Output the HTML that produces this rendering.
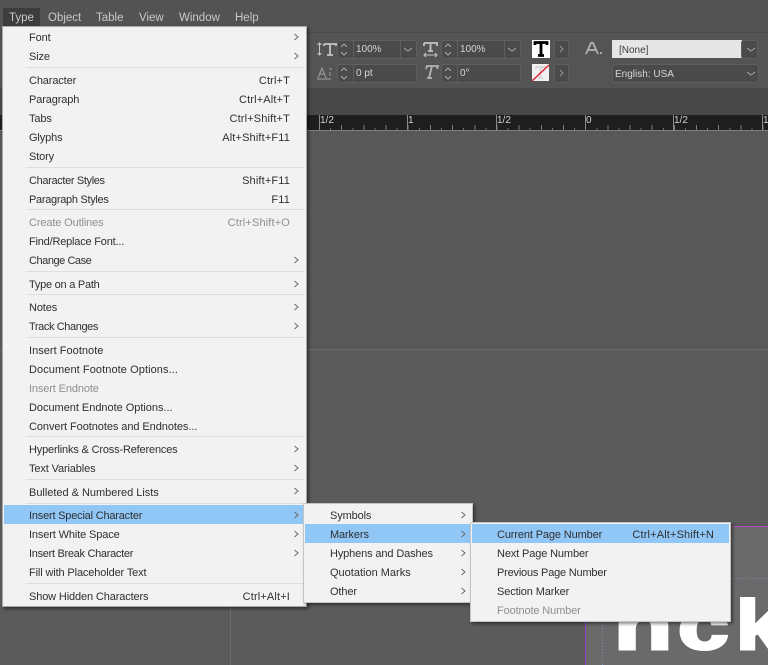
<!DOCTYPE html>
<html><head><meta charset="utf-8"><style>
html,body{margin:0;padding:0;width:768px;height:665px;overflow:hidden;background:#595959}
body{position:relative;font-family:"Liberation Sans",sans-serif}
div,span,svg{position:absolute}
.t{font-size:11px;letter-spacing:-.13px;line-height:16px;height:16px;color:#2f2f2f;white-space:nowrap;margin-top:1px}
.s{text-align:right;letter-spacing:.15px}
.d{color:#8f8f8f}
.m{font-size:11.5px;letter-spacing:0;color:#c9c9c9;line-height:16px;top:10px;white-space:nowrap}
.sep{background:#dedede;height:1px}
.hl{background:#91c7f7;height:19px}
.box{border:1px solid #5f5f5f;border-radius:3px;background:#4a4a4a;box-sizing:border-box;height:19px}
.v{background:#5f5f5f;width:1px;height:17px;top:0}
.c{font-size:10px;color:#d6d6d6;line-height:17px;white-space:nowrap;margin-top:1px}
.rt{font-size:10px;color:#d0d0d0;top:115px;line-height:12px;margin-left:-1px}
.rm{background:#8a8a8a;width:1px;top:115px;height:15px}
</style></head><body>

<!-- app top bar -->
<div style="left:0;top:0;width:768px;height:33px;background:#535353"></div>
<div style="left:0;top:32px;width:768px;height:1px;background:#4a4a4a"></div>
<div style="left:3px;top:8px;width:37px;height:18px;background:#3d3d3d"></div>
<div class="m" style="left:9px">Type</div>
<div class="m" style="left:48px">Object</div>
<div class="m" style="left:96px">Table</div>
<div class="m" style="left:139px">View</div>
<div class="m" style="left:179px">Window</div>
<div class="m" style="left:235px">Help</div>

<!-- control panel -->
<div style="left:0;top:33px;width:768px;height:55px;background:#545454"></div>
<div style="left:0;top:88px;width:768px;height:27px;background:#484848"></div>

<div class="box" style="left:337px;top:40px;width:80px"><div class="v" style="left:15px"></div><div class="v" style="left:62px"></div></div>
<div class="c" style="left:356px;top:40px">100%</div>
<div class="box" style="left:337px;top:64px;width:80px"><div class="v" style="left:15px"></div></div>
<div class="c" style="left:356px;top:64px">0 pt</div>
<div class="box" style="left:441px;top:40px;width:80px"><div class="v" style="left:15px"></div><div class="v" style="left:62px"></div></div>
<div class="c" style="left:460px;top:40px">100%</div>
<div class="box" style="left:441px;top:64px;width:80px"><div class="v" style="left:15px"></div></div>
<div class="c" style="left:460px;top:64px">0°</div>
<div class="box" style="left:554px;top:40px;width:15px"></div>
<div class="box" style="left:554px;top:64px;width:15px"></div>

<svg style="left:0;top:0" width="768" height="120" fill="none" stroke="#a8a8a8" stroke-width="1">
<path d="M341 47l3-3 3 3M341 52l3 3 3-3M445 47l3-3 3 3M445 52l3 3 3-3M341 71l3-3 3 3M341 76l3 3 3-3M445 71l3-3 3 3M445 76l3 3 3-3"/>
<path d="M404 48l4 3 4-3M508 48l4 3 4-3"/>
<path d="M560 46l3 3-3 3M560 70l3 3-3 3" stroke="#9a9a9a"/>
<path d="M319.500 43v12M317.500 45l2-2 2 2M317.500 53l2 2 2-2" stroke="#c4c4c4"/>
<path d="M324 44h12v2M324 44v2M330 44v11M327 55h6" stroke="#c4c4c4" stroke-width="1.800"/>
<path d="M424 43h13v3M424 43v3M430.500 43v8M428 51h5" stroke="#c4c4c4" stroke-width="1.800"/>
<path d="M424 55h13M426 53l-2 2 2 2M435 53l2 2-2 2" stroke="#c4c4c4"/>
<path d="M318 78l4-10 4 10M320 74h4M317 79h14M329 69h3M330 76v-4" stroke="#a2a2a2"/>
<path d="M426 66h12l-1 3M427 66l-1 3M432 66l-3 12M427 78h5" stroke="#b4b4b4" stroke-width="1.800"/>
<path d="M586 54l5-11h2l5 11M588 50h8" stroke="#a8a8a8" stroke-width="2"/>
<path d="M600 53h2" stroke="#a8a8a8" stroke-width="2"/>
</svg>

<!-- swatches -->
<div style="left:532px;top:40px;width:18px;height:18px;background:#fff"></div>
<svg style="left:532px;top:40px" width="18" height="18"><path d="M3 5V2.500H15V5M9 2.500V15M6 15.500H12" fill="none" stroke="#000" stroke-width="2.800"/></svg>
<div style="left:532px;top:64px;width:17px;height:17px;background:#f2f2f2"></div>
<svg style="left:532px;top:64px" width="18" height="18"><path d="M4 5V3H13V5M8.500 3V14M6 14H11" fill="none" stroke="#d8d8d8" stroke-width="2"/><path d="M0 17L17 1" stroke="#e5232a" stroke-width="1.500"/></svg>

<!-- dropdowns right -->
<div style="left:612px;top:40px;width:130px;height:18px;background:#e6e6e6"></div>
<div class="box" style="left:741px;top:40px;width:17px"></div>
<div class="c" style="left:619px;top:41px;color:#3a3a3a">[None]</div>
<div class="box" style="left:612px;top:64px;width:147px"></div>
<div class="c" style="left:615px;top:65px">English: USA</div>
<svg style="left:0;top:0" width="768" height="90" fill="none" stroke="#a8a8a8"><path d="M747 48l4 3 4-3M747 72l4 3 4-3"/></svg>

<!-- ruler -->
<div style="left:0;top:115px;width:768px;height:15px;background:#1e1e1e"></div>
<div style="left:319px;top:128px;width:449px;height:2px;background:repeating-linear-gradient(90deg,#6e6e6e 0,#6e6e6e 1px,transparent 1px,transparent 11.09px)"></div>
<div style="left:319px;top:125px;width:449px;height:5px;background:repeating-linear-gradient(90deg,#7a7a7a 0,#7a7a7a 1px,transparent 1px,transparent 22.18px)"></div>
<div class="rm" style="left:319px"></div><div class="rm" style="left:407px"></div><div class="rm" style="left:496px"></div><div class="rm" style="left:585px"></div><div class="rm" style="left:673px"></div><div class="rm" style="left:762px"></div>
<div class="rt" style="left:321px">1/2</div><div class="rt" style="left:409px">1</div><div class="rt" style="left:498px">1/2</div><div class="rt" style="left:587px">0</div><div class="rt" style="left:675px">1/2</div><div class="rt" style="left:764px">1</div>
<div style="left:0;top:130px;width:768px;height:1px;background:#808080"></div>

<!-- canvas -->
<div style="left:0;top:131px;width:768px;height:218px;background:#585858"></div>
<div style="left:0;top:349px;width:768px;height:1px;background:#6b6b6b"></div>
<div style="left:0;top:350px;width:768px;height:315px;background:#5b5b5b"></div>
<div style="left:230px;top:350px;width:1px;height:315px;background:#6d6d6d"></div>

<!-- page -->
<div style="left:585px;top:526px;width:183px;height:139px;background:#6a6a6a"></div>
<div style="left:585px;top:526px;width:183px;height:1px;background:#b04cc0"></div>
<div style="left:585px;top:526px;width:1px;height:139px;background:#8d45c8"></div>
<div style="left:602px;top:578px;width:166px;height:1px;background:repeating-linear-gradient(90deg,#6f8fb5 0,#6f8fb5 1px,transparent 1px,transparent 3px)"></div>
<div style="left:602px;top:578px;width:1px;height:87px;background:repeating-linear-gradient(0deg,#6f8fb5 0,#6f8fb5 1px,transparent 1px,transparent 3px)"></div>

<div style="left:0;top:0;width:768px;height:665px;overflow:hidden;font-family:'Liberation Sans',sans-serif;font-weight:700;color:#fff;font-size:70px;line-height:70px">
<span style="left:614px;top:590px;transform:scaleX(1.36);transform-origin:left;-webkit-text-stroke:3px #fff">n</span>
<span style="left:678px;top:590px;transform:scaleX(1.3);transform-origin:left;-webkit-text-stroke:3px #fff">c</span>
<span style="left:736px;top:590px;transform:scaleX(1.2);transform-origin:left;-webkit-text-stroke:3px #fff">k</span>
</div>

<!-- main menu -->
<div style="left:2px;top:26px;width:305px;height:581px;background:#f2f2f2;border:1px solid #a8a8a8;box-sizing:border-box;box-shadow:2px 2px 3px rgba(0,0,0,.45)"></div>
<div class="sep" style="left:26px;top:67px;width:279px"></div>
<div class="sep" style="left:26px;top:167px;width:279px"></div>
<div class="sep" style="left:26px;top:209px;width:279px"></div>
<div class="sep" style="left:26px;top:271px;width:279px"></div>
<div class="sep" style="left:26px;top:294px;width:279px"></div>
<div class="sep" style="left:26px;top:337px;width:279px"></div>
<div class="sep" style="left:26px;top:436px;width:279px"></div>
<div class="sep" style="left:26px;top:479px;width:279px"></div>
<div class="sep" style="left:26px;top:503px;width:279px"></div>
<div class="sep" style="left:26px;top:583px;width:279px"></div>
<div class="hl" style="left:4px;top:505px;width:299px"></div>

<div class="t" style="left:29px;top:29px">Font</div>
<div class="t" style="left:29px;top:48px">Size</div>
<div class="t" style="left:29px;top:72px">Character</div>
<div class="t" style="left:29px;top:91px">Paragraph</div>
<div class="t" style="left:29px;top:110px">Tabs</div>
<div class="t" style="left:29px;top:129px">Glyphs</div>
<div class="t" style="left:29px;top:148px">Story</div>
<div class="t" style="left:29px;top:172px;letter-spacing:-.35px">Character Styles</div>
<div class="t" style="left:29px;top:191px;letter-spacing:-.3px">Paragraph Styles</div>
<div class="t d" style="left:29px;top:214px">Create Outlines</div>
<div class="t" style="left:29px;top:233px;letter-spacing:-.2px">Find/Replace Font...</div>
<div class="t" style="left:29px;top:252px;letter-spacing:-.45px">Change Case</div>
<div class="t" style="left:29px;top:276px;letter-spacing:-.25px">Type on a Path</div>
<div class="t" style="left:29px;top:299px">Notes</div>
<div class="t" style="left:29px;top:318px;letter-spacing:-.4px">Track Changes</div>
<div class="t" style="left:29px;top:342px;letter-spacing:.03px">Insert Footnote</div>
<div class="t" style="left:29px;top:361px;letter-spacing:.08px">Document Footnote Options...</div>
<div class="t d" style="left:29px;top:380px">Insert Endnote</div>
<div class="t" style="left:29px;top:399px;letter-spacing:-.03px">Document Endnote Options...</div>
<div class="t" style="left:29px;top:418px;letter-spacing:-.07px">Convert Footnotes and Endnotes...</div>
<div class="t" style="left:29px;top:441px;letter-spacing:-.17px">Hyperlinks &amp; Cross-References</div>
<div class="t" style="left:29px;top:460px">Text Variables</div>
<div class="t" style="left:29px;top:484px;letter-spacing:-.02px">Bulleted &amp; Numbered Lists</div>
<div class="t" style="left:29px;top:507px;letter-spacing:-.2px">Insert Special Character</div>
<div class="t" style="left:29px;top:526px">Insert White Space</div>
<div class="t" style="left:29px;top:545px;letter-spacing:-.3px">Insert Break Character</div>
<div class="t" style="left:29px;top:564px">Fill with Placeholder Text</div>
<div class="t" style="left:29px;top:588px">Show Hidden Characters</div>

<div class="t s" style="right:478px;top:72px">Ctrl+T</div>
<div class="t s" style="right:478px;top:91px">Ctrl+Alt+T</div>
<div class="t s" style="right:478px;top:110px">Ctrl+Shift+T</div>
<div class="t s" style="right:478px;top:129px">Alt+Shift+F11</div>
<div class="t s" style="right:478px;top:172px">Shift+F11</div>
<div class="t s" style="right:478px;top:191px">F11</div>
<div class="t s d" style="right:478px;top:214px">Ctrl+Shift+O</div>
<div class="t s" style="right:478px;top:588px">Ctrl+Alt+I</div>

<!-- submenu 1 -->
<div style="left:303px;top:503px;width:170px;height:100px;background:#f2f2f2;border:1px solid #c4c4c4;box-sizing:border-box;box-shadow:2px 2px 3px rgba(0,0,0,.45)"></div>
<div class="hl" style="left:305px;top:524px;width:166px"></div>
<div class="t" style="left:330px;top:507px">Symbols</div>
<div class="t" style="left:330px;top:526px">Markers</div>
<div class="t" style="left:330px;top:545px">Hyphens and Dashes</div>
<div class="t" style="left:330px;top:564px;letter-spacing:0">Quotation Marks</div>
<div class="t" style="left:330px;top:583px">Other</div>

<!-- submenu 2 -->
<div style="left:470px;top:522px;width:261px;height:100px;background:#f2f2f2;border:1px solid #c4c4c4;box-sizing:border-box;box-shadow:2px 2px 3px rgba(0,0,0,.45)"></div>
<div class="hl" style="left:472px;top:524px;width:257px"></div>
<div class="t" style="left:497px;top:526px">Current Page Number</div>
<div class="t" style="left:497px;top:545px">Next Page Number</div>
<div class="t" style="left:497px;top:564px;letter-spacing:-.2px">Previous Page Number</div>
<div class="t" style="left:497px;top:583px">Section Marker</div>
<div class="t d" style="left:497px;top:602px">Footnote Number</div>
<div class="t s" style="right:54px;top:526px">Ctrl+Alt+Shift+N</div>

<!-- chevrons -->
<svg style="left:0;top:0" width="768" height="665" fill="none" stroke="#6a6a6a" stroke-width="1">
<path d="M294.500 34l3.500 3-3.500 3M294.500 53l3.500 3-3.500 3M294.500 257l3.500 3-3.500 3M294.500 281l3.500 3-3.500 3M294.500 304l3.500 3-3.500 3M294.500 323l3.500 3-3.500 3M294.500 446l3.500 3-3.500 3M294.500 465l3.500 3-3.500 3M294.500 488l3.500 3-3.500 3M294.500 512l3.500 3-3.500 3M294.500 531l3.500 3-3.500 3M294.500 550l3.500 3-3.500 3"/>
<path d="M461.500 512l3.500 3-3.500 3M461.500 531l3.500 3-3.500 3M461.500 550l3.500 3-3.500 3M461.500 569l3.500 3-3.500 3M461.500 588l3.500 3-3.500 3"/>
</svg>
</body></html>
